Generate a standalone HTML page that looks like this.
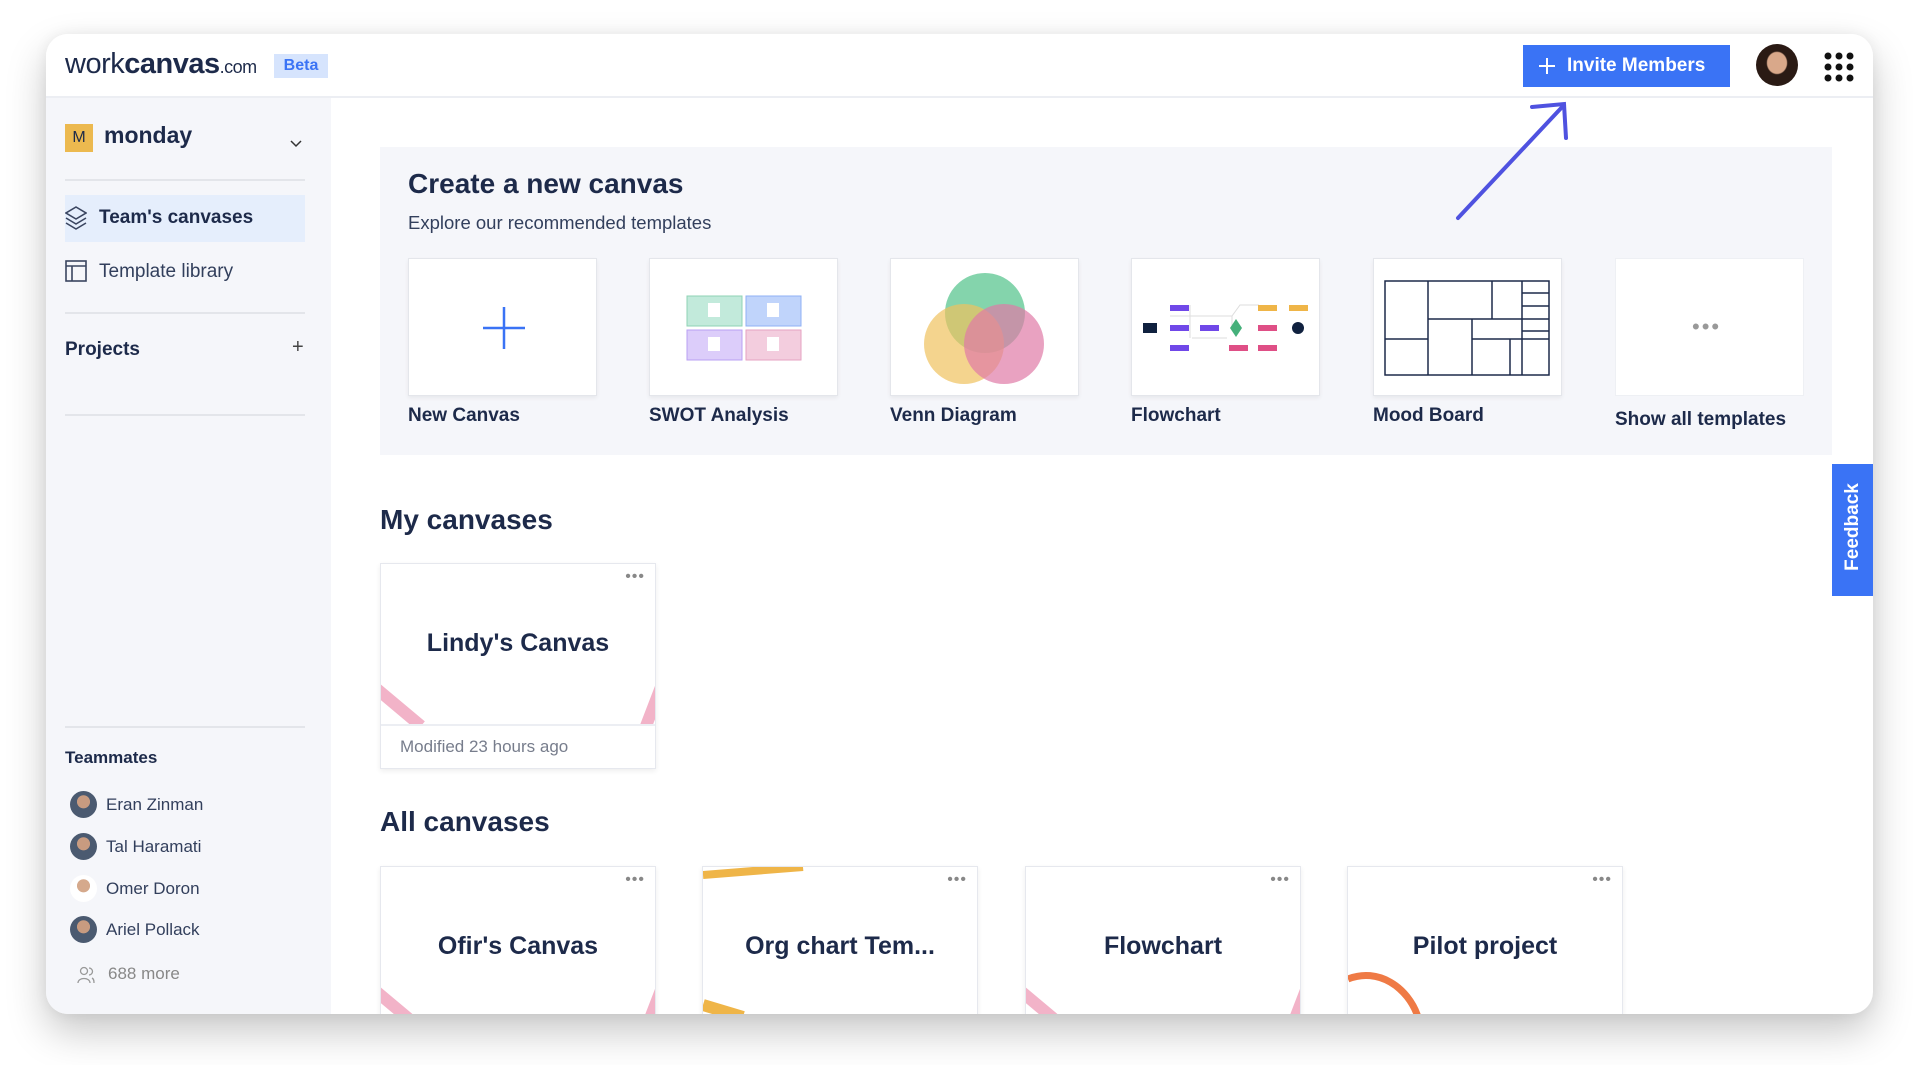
<!DOCTYPE html>
<html><head><meta charset="utf-8"><style>
*{box-sizing:border-box;margin:0;padding:0}
body{width:1920px;height:1065px;background:#fff;font-family:"Liberation Sans",sans-serif;color:#1d2a4a;overflow:hidden;position:relative}
.win{position:absolute;left:46px;top:34px;width:1827px;height:980px;background:#fff;border-radius:22px;overflow:hidden;box-shadow:0 18px 40px rgba(0,0,0,.22),0 0 14px rgba(0,0,0,.06)}
.hdr{position:absolute;left:0;top:0;right:0;height:64px;border-bottom:2px solid #eceef3;background:#fff}
.abs{position:absolute}
.side{position:absolute;left:0;top:64px;width:285px;bottom:0;background:#f5f6fa}
.div{position:absolute;left:19px;width:240px;height:2px;background:#e3e5ea}
.card{position:absolute;background:#fff;border:1px solid #e4e6eb;box-shadow:0 2px 4px rgba(0,0,0,.06)}
.lbl{position:absolute;font-size:19px;font-weight:bold;color:#1d2a4a}
.cv{position:absolute;width:276px;background:#fff;border:1px solid #e6e8ee;box-shadow:0 2px 5px rgba(0,0,0,.07);overflow:hidden}
.cv .t{position:absolute;left:0;right:0;text-align:center;font-size:25px;font-weight:bold;color:#1d2a4a}
.dots{position:absolute;right:10px;top:4px;font-size:16px;color:#888;letter-spacing:1px}
.tm{position:absolute;left:24px;font-size:17px;color:#323f5c;display:flex;align-items:center}
.tm i{display:inline-block;width:27px;height:27px;border-radius:50%;background:radial-gradient(circle at 50% 40%,#c89b80 0 30%,#4b5a70 32%);margin-right:9px}
</style></head><body>
<div class="win">
 <div class="hdr">
  <div class="abs" style="left:19px;top:14px;font-size:29px;color:#1d2a4a;letter-spacing:-.5px">work<b>canvas</b><span style="font-size:18px">.com</span></div>
  <div class="abs" style="left:228px;top:20px;width:54px;height:24px;background:#d6e4fd;color:#3a73f5;font-size:16px;font-weight:bold;text-align:center;line-height:24px">Beta</div>
  <div class="abs" style="left:1477px;top:11px;width:207px;height:42px;background:#3a73f5;color:#fff;font-size:19px;font-weight:bold;line-height:42px;padding-left:44px">Invite Members
   <svg class="abs" style="left:16px;top:13px" width="16" height="16"><path d="M8 0V16M0 8H16" stroke="#fff" stroke-width="2"/></svg></div>
  <div class="abs" style="left:1710px;top:10px;width:42px;height:42px;border-radius:50%;background:radial-gradient(ellipse at 50% 45%,#d9a88a 0 32%,#2a1a14 36%)"></div>
  <svg class="abs" style="left:1778px;top:18px" width="30" height="30"><g fill="#111"><circle cx="4" cy="4" r="3.5"/><circle cx="15" cy="4" r="3.5"/><circle cx="26" cy="4" r="3.5"/><circle cx="4" cy="15" r="3.5"/><circle cx="15" cy="15" r="3.5"/><circle cx="26" cy="15" r="3.5"/><circle cx="4" cy="26" r="3.5"/><circle cx="15" cy="26" r="3.5"/><circle cx="26" cy="26" r="3.5"/></g></svg>
 </div>
 <div class="side">
  <div class="abs" style="left:19px;top:26px;width:28px;height:28px;background:#ecb94f;color:#1d2a4a;font-size:16px;text-align:center;line-height:28px">M</div>
  <div class="abs" style="left:58px;top:24px;font-size:23px;font-weight:bold">monday</div>
  <svg class="abs" style="left:244px;top:42px" width="12" height="8"><path d="M1 1L6 6L11 1" stroke="#333" stroke-width="1.5" fill="none"/></svg>
  <div class="div" style="top:81px"></div>
  <div class="abs" style="left:19px;top:97px;width:240px;height:47px;background:#e5eefc"></div>
  <svg class="abs" style="left:19px;top:108px" width="22" height="24"><g fill="none" stroke="#3a4560" stroke-width="1.6"><path d="M11 1L21 7L11 13L1 7Z"/><path d="M1 12L11 18L21 12"/><path d="M1 17L11 23L21 17"/></g></svg>
  <div class="abs" style="left:53px;top:109px;font-size:19px;font-weight:bold">Team's canvases</div>
  <svg class="abs" style="left:19px;top:162px" width="22" height="22"><g fill="none" stroke="#3a4560" stroke-width="1.6"><rect x="1" y="1" width="20" height="20"/><path d="M1 6H21M7 6V21"/></g></svg>
  <div class="abs" style="left:53px;top:163px;font-size:19px;color:#323f5c">Template library</div>
  <div class="div" style="top:214px"></div>
  <div class="abs" style="left:19px;top:241px;font-size:19px;font-weight:bold">Projects</div>
  <div class="abs" style="left:246px;top:238px;font-size:20px;color:#444">+</div>
  <div class="div" style="top:316px"></div>
  <div class="div" style="top:628px"></div>
  <div class="abs" style="left:19px;top:650px;font-size:17px;font-weight:bold">Teammates</div>
  <div class="tm" style="top:693px"><i></i>Eran Zinman</div>
  <div class="tm" style="top:735px"><i></i>Tal Haramati</div>
  <div class="tm" style="top:777px"><i style="background:radial-gradient(circle at 50% 40%,#d5a98c 0 30%,#fff 32%)"></i>Omer Doron</div>
  <div class="tm" style="top:818px"><i></i>Ariel Pollack</div>
  <svg class="abs" style="left:31px;top:868px" width="18" height="18"><g fill="none" stroke="#999" stroke-width="1.3"><circle cx="7" cy="5" r="3.5"/><path d="M1 17C1 11 13 11 13 17"/><path d="M12 2A3.5 3.5 0 0 1 12 9M15 12C17 13 17 15 17 17"/></g></svg>
  <div class="abs" style="left:62px;top:866px;font-size:17px;color:#888">688 more</div>
 </div>
 <!-- main -->
 <div class="abs" style="left:334px;top:113px;width:1452px;height:308px;background:#f5f6fa"></div>
 <div class="abs" style="left:362px;top:134px;font-size:28px;font-weight:bold">Create a new canvas</div>
 <div class="abs" style="left:362px;top:178px;font-size:18.5px;color:#323f5c">Explore our recommended templates</div>

 <div class="card" style="left:362px;top:224px;width:189px;height:138px"><svg class="abs" style="left:74px;top:48px" width="42" height="42"><path d="M21 0V42M0 21H42" stroke="#3a73f5" stroke-width="2.5"/></svg></div>
 <div class="lbl" style="left:362px;top:371px">New Canvas</div>

 <div class="card" style="left:603px;top:224px;width:189px;height:138px"><svg class="abs" style="left:36px;top:36px" width="116" height="66"><rect x="1" y="1" width="55" height="30" fill="#c2eadb" stroke="#8fd3b5"/><rect x="60" y="1" width="55" height="30" fill="#c0d4fb" stroke="#8fb0f5"/><rect x="1" y="35" width="55" height="30" fill="#dccdfa" stroke="#b9a0f3"/><rect x="60" y="35" width="55" height="30" fill="#f3cdde" stroke="#e6a2c2"/><g fill="#fff"><rect x="22" y="8" width="12" height="14"/><rect x="81" y="8" width="12" height="14"/><rect x="22" y="42" width="12" height="14"/><rect x="81" y="42" width="12" height="14"/></g></svg></div>
 <div class="lbl" style="left:603px;top:371px">SWOT Analysis</div>

 <div class="card" style="left:844px;top:224px;width:189px;height:138px;overflow:hidden"><svg width="189" height="138"><circle cx="94" cy="54" r="40" fill="#6fcd9e" opacity=".85"/><circle cx="73" cy="85" r="40" fill="#efc25e" opacity=".7"/><circle cx="113" cy="85" r="40" fill="#e07aa6" opacity=".7"/></svg></div>
 <div class="lbl" style="left:844px;top:371px">Venn Diagram</div>

 <div class="card" style="left:1085px;top:224px;width:189px;height:138px"><svg width="189" height="138"><g stroke="#ddd" fill="none"><path d="M38 57H100M58 46V79M60 79H95M100 69V57L108 46H127"/></g><rect x="11" y="64" width="14" height="10" fill="#10213f"/><g fill="#7048e8"><rect x="38" y="46" width="19" height="6"/><rect x="38" y="66" width="19" height="6"/><rect x="38" y="86" width="19" height="6"/><rect x="68" y="66" width="19" height="6"/></g><path d="M104 60L110 69L104 78L98 69Z" fill="#45b07a"/><g fill="#df4f86"><rect x="126" y="66" width="19" height="6"/><rect x="97" y="86" width="19" height="6"/><rect x="126" y="86" width="19" height="6"/></g><g fill="#efb548"><rect x="126" y="46" width="19" height="6"/><rect x="157" y="46" width="19" height="6"/></g><circle cx="166" cy="69" r="6" fill="#10213f"/></svg></div>
 <div class="lbl" style="left:1085px;top:371px">Flowchart</div>

 <div class="card" style="left:1327px;top:224px;width:189px;height:138px"><svg width="189" height="138"><g fill="none" stroke="#1d2a4a" stroke-width="1.5"><rect x="11" y="22" width="164" height="94"/><path d="M54 22V116M11 80H54M54 60H175M118 22V60M148 22V116M148 34H175M148 47H175M148 72H175M98 60V116M98 80H175M136 80V116"/></g></svg></div>
 <div class="lbl" style="left:1327px;top:371px">Mood Board</div>

 <div class="card" style="left:1569px;top:224px;width:189px;height:138px;box-shadow:none;border-color:#eef0f4"><div class="abs" style="left:76px;top:55px;font-size:22px;color:#999;letter-spacing:2px">•••</div></div>
 <div class="lbl" style="left:1569px;top:375px">Show all templates</div>

 <div class="abs" style="left:1786px;top:430px;width:41px;height:132px;background:#3a73f5"><div class="abs" style="left:-44px;top:52px;width:130px;transform:rotate(-90deg);color:#fff;font-size:19px;font-weight:bold;text-align:center">Feedback</div></div>

 <svg class="abs" style="left:1400px;top:27px" width="140" height="170"><g stroke="#4f52e0" stroke-width="4" fill="none" stroke-linecap="round"><path d="M12 157L118 44"/><path d="M86 46L118 43L120 77"/></g></svg>

 <div class="abs" style="left:334px;top:470px;font-size:28px;font-weight:bold">My canvases</div>
 <div class="cv" style="left:334px;top:529px;height:206px">
  <div class="dots">•••</div>
  <svg class="abs" style="left:0;top:90px" width="276" height="72"><path d="M-10 30L40 72M265 72L285 20" stroke="#f2b3c8" stroke-width="12"/></svg>
  <div class="t" style="top:65px">Lindy's Canvas</div>
  <div class="abs" style="left:0;right:0;top:160px;bottom:0;background:#fff;border-top:2px solid #eceef3"></div>
  <div class="abs" style="left:19px;top:173px;font-size:17px;color:#777d8c">Modified 23 hours ago</div>
 </div>

 <div class="abs" style="left:334px;top:772px;font-size:28px;font-weight:bold">All canvases</div>
 <div class="cv" style="left:334px;top:832px;height:160px"><div class="dots">•••</div><svg class="abs" style="left:0;top:90px" width="276" height="72"><path d="M-10 30L40 72M265 72L285 20" stroke="#f2b3c8" stroke-width="12"/></svg><div class="t" style="top:65px">Ofir's Canvas</div></div>
 <div class="cv" style="left:656px;top:832px;height:160px"><div class="dots">•••</div><svg class="abs" style="left:0;top:0" width="276" height="160"><path d="M0 8L100 0" stroke="#efb548" stroke-width="8"/><path d="M0 138L40 150" stroke="#efb548" stroke-width="12"/></svg><div class="t" style="top:65px">Org chart Tem...</div></div>
 <div class="cv" style="left:979px;top:832px;height:160px"><div class="dots">•••</div><svg class="abs" style="left:0;top:90px" width="276" height="72"><path d="M-10 30L40 72M265 72L285 20" stroke="#f2b3c8" stroke-width="12"/></svg><div class="t" style="top:65px">Flowchart</div></div>
 <div class="cv" style="left:1301px;top:832px;height:160px"><div class="dots">•••</div><svg class="abs" style="left:0;top:0" width="276" height="160"><path d="M0 112C30 100 60 120 70 150M200 158C230 150 260 152 276 158" stroke="#ef7a45" stroke-width="7" fill="none"/></svg><div class="t" style="top:65px">Pilot project</div></div>
</div>
</body></html>
